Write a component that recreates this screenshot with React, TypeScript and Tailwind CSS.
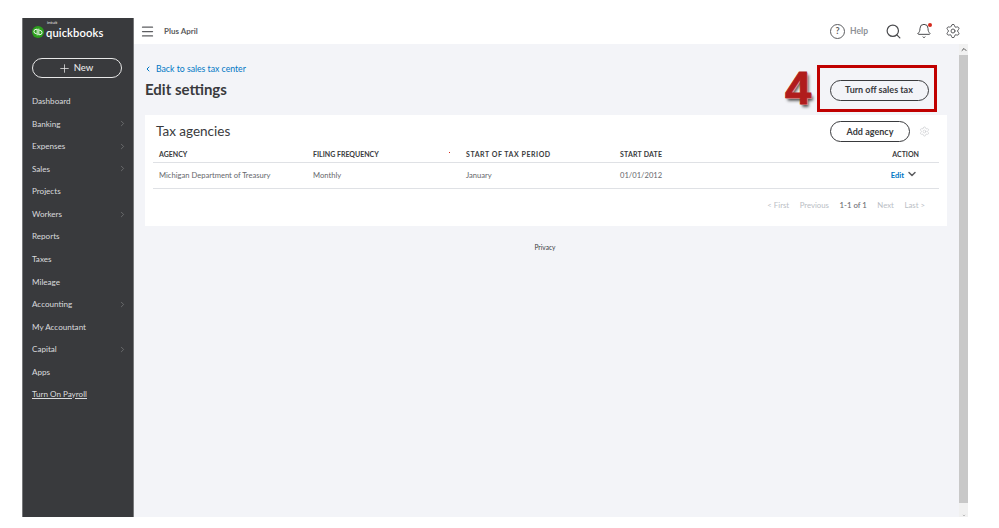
import { ChevronDown, ChevronLeft, ChevronRight, ChevronUp, Menu, Plus, Search, Bell, Settings } from "lucide-react"

const navItems = [
  { label: "Dashboard" },
  { label: "Banking", arrow: true },
  { label: "Expenses", arrow: true },
  { label: "Sales", arrow: true },
  { label: "Projects" },
  { label: "Workers", arrow: true },
  { label: "Reports" },
  { label: "Taxes" },
  { label: "Mileage" },
  { label: "Accounting", arrow: true },
  { label: "My Accountant" },
  { label: "Capital", arrow: true },
  { label: "Apps" },
]

function Sidebar() {
  return (
    <aside className="w-[112px] shrink-0 flex flex-col bg-[#393a3d] border-x border-[#77787a] text-[#d9dbde]">
      <div className="h-[27px] flex items-center gap-[2px] pl-[9px]">
        <svg width="12" height="12" viewBox="0 0 13 13" className="shrink-0">
          <circle cx="6.5" cy="6.5" r="6.5" fill="#2ca01c" />
          <path d="M5.6 3.6H4.4a2.3 2.3 0 0 0 0 4.6h.6M5.6 3.1v7M7.4 9.4h1.2a2.3 2.3 0 0 0 0-4.6H8M7.4 9.9v-7" fill="none" stroke="#fff" strokeWidth="1" />
        </svg>
        <div className="relative">
          <span className="absolute left-[1px] -top-[3px] text-[4.5px] leading-none text-[#e8e8e8]">intuit</span>
          <span className="block text-[11.2px] leading-[14px] font-semibold tracking-[0.1px] text-white pt-[2px]">quickbooks</span>
        </div>
      </div>
      <div className="px-[9px] pt-[13px]">
        <button className="w-[90px] h-[20px] rounded-full border border-[#e8e8e8] flex items-center justify-center gap-[3px] pr-[3px] text-[9.5px] font-medium text-[#e8e8e8]">
          <Plus size={13} strokeWidth={1.4} />
          <span>New</span>
        </button>
      </div>
      <nav className="pt-[12px] flex flex-col">
        {navItems.map((item) => (
          <div key={item.label} className="h-[22.55px] flex items-center justify-between pl-[9px] pr-[6px] text-[8.1px]">
            <span>{item.label}</span>
            {item.arrow && <ChevronRight size={9} strokeWidth={2} className="text-[#77787a]" />}
          </div>
        ))}
        <div className="h-[21px] flex items-center pl-[9px] text-[8.1px] underline">Turn On Payroll</div>
      </nav>
    </aside>
  )
}

function TopBar() {
  return (
    <header className="h-[26px] shrink-0 flex items-center bg-white pl-[6px] pr-[7px] text-[#393a3d]">
      <Menu size={15} strokeWidth={2} className="text-[#5c5d60]" />
      <span className="ml-[9px] text-[8px] font-bold text-[#5c5d60]">Plus April</span>
      <div className="ml-auto flex items-center">
        <span className="w-[15px] h-[15px] rounded-full border border-[#5c5d60] flex items-center justify-center text-[9px] font-bold text-[#5c5d60]">?</span>
        <span className="ml-[5px] text-[8.5px] font-bold text-[#8d9096]">Help</span>
        <Search size={17} strokeWidth={1.7} className="ml-[17px] text-[#4a4b4e]" />
        <span className="relative ml-[14px]">
          <Bell size={16} strokeWidth={1.5} className="text-[#4a4b4e]" />
          <span className="absolute right-0 top-0 w-[4px] h-[4px] rounded-full bg-[#d52b1e]" />
        </span>
        <Settings size={16} strokeWidth={1.5} className="ml-[13px] text-[#5c5d60]" />
      </div>
    </header>
  )
}

function AgencyCard() {
  return (
    <section className="mt-[3px] h-[111px] bg-white flex flex-col">
      <div className="h-[33px] shrink-0 flex items-center justify-between pl-[11px] pr-[17px]">
        <h2 className="text-[13.5px] text-[#393a3d]">Tax agencies</h2>
        <div className="flex items-center">
          <button className="w-[80px] h-[21px] rounded-full border border-[#393a3d] text-[9px] font-bold text-[#393a3d]">Add agency</button>
          <Settings size={11} strokeWidth={1.3} className="ml-[9px] text-[#c6c7ca]" />
        </div>
      </div>
      <div className="mx-[8px] relative">
        <div className="h-[15px] pb-[2px] grid grid-cols-[154px_153px_154px_1fr_auto] items-center px-[6px] text-[7px] font-bold text-[#393a3d] border-b border-[#dfe1e5]">
          <span>AGENCY</span>
          <span>FILING FREQUENCY</span>
          <span className="tracking-[0.55px]">START OF TAX PERIOD</span>
          <span className="tracking-[0.2px]">START DATE</span>
          <span className="pr-[14px]">ACTION</span>
        </div>
        <span className="absolute left-[296px] top-[4px] w-px h-px bg-[#d52b1e]" />
        <div className="h-[26px] grid grid-cols-[154px_153px_154px_1fr_auto] items-center px-[6px] text-[7.6px] text-[#66676c] border-b border-[#dfe1e5]">
          <span>Michigan Department of Treasury</span>
          <span>Monthly</span>
          <span>January</span>
          <span>01/01/2012</span>
          <span className="flex items-center pr-[15px]">
            <span className="font-bold text-[#0077c5]">Edit</span>
            <ChevronDown size={12} strokeWidth={3} className="ml-[2px] -mt-[2px] text-[#5c5d60]" />
          </span>
        </div>
        <div className="h-[33px] flex items-center justify-end gap-[10.5px] pr-[14px] text-[7.8px] text-[#babec5]">
          <span>&lt; First</span>
          <span>Previous</span>
          <span className="text-[#6b6c72] font-medium">1-1 of 1</span>
          <span>Next</span>
          <span>Last &gt;</span>
        </div>
      </div>
    </section>
  )
}

function Content() {
  return (
    <main className="flex-1 min-w-0 bg-[#f3f4f8] pl-[11px] pr-[12px] flex flex-col">
      <div className="h-[68px] shrink-0 flex justify-between">
        <div className="pt-[19px]">
          <a className="flex items-center text-[8.7px] leading-[12px] text-[#0077c5]">
            <ChevronLeft size={8} strokeWidth={3} className="-ml-[1px] mr-[4px]" />
            Back to sales tax center
          </a>
          <h1 className="mt-[4px] text-[15px] leading-[20px] font-bold text-[#393a3d]">Edit settings</h1>
        </div>
        <div className="relative mt-[21px] mr-[10px] h-[47px] w-[120px] border-[3px] border-[#c00000] flex items-center justify-center pt-[3px] pl-[4px]">
          <button className="w-[99px] h-[21px] rounded-full border border-[#393a3d] text-[9px] font-bold text-[#393a3d]">Turn off sales tax</button>
          <span className="absolute -left-[35px] -top-[7px] text-[47px] leading-[54px] font-bold text-[#b01c1c] font-['Liberation_Sans',sans-serif] [-webkit-text-stroke:1px_#b01c1c] [text-shadow:1px_1px_0_#e8a0a0,2px_3px_3px_#555]">4</span>
        </div>
      </div>
      <AgencyCard />
      <p className="mt-[17px] text-center text-[6.6px] text-[#393a3d] pr-[2px]">Privacy</p>
    </main>
  )
}

function Scrollbar() {
  return (
    <div className="w-[9px] shrink-0 bg-[#f1f1f1] flex flex-col items-center text-[#505050]">
      <ChevronUp size={8} strokeWidth={3} className="my-[1px] h-[9px]" />
      <div className="flex-1 w-full bg-[#c8c8c8]" />
      <ChevronDown size={8} strokeWidth={3} className="mt-[11px] mb-0 h-[3px]" />
    </div>
  )
}

export default function App() {
  return (
    <div className="h-[528px] w-[999px] overflow-hidden bg-white pt-[18px] font-['Lato',sans-serif]">
      <div className="ml-[22px] w-[946px] h-[499px] flex">
        <Sidebar />
        <div className="flex-1 min-w-0 flex flex-col">
          <TopBar />
          <div className="flex-1 min-h-0 flex">
            <Content />
            <Scrollbar />
          </div>
        </div>
      </div>
    </div>
  )
}
